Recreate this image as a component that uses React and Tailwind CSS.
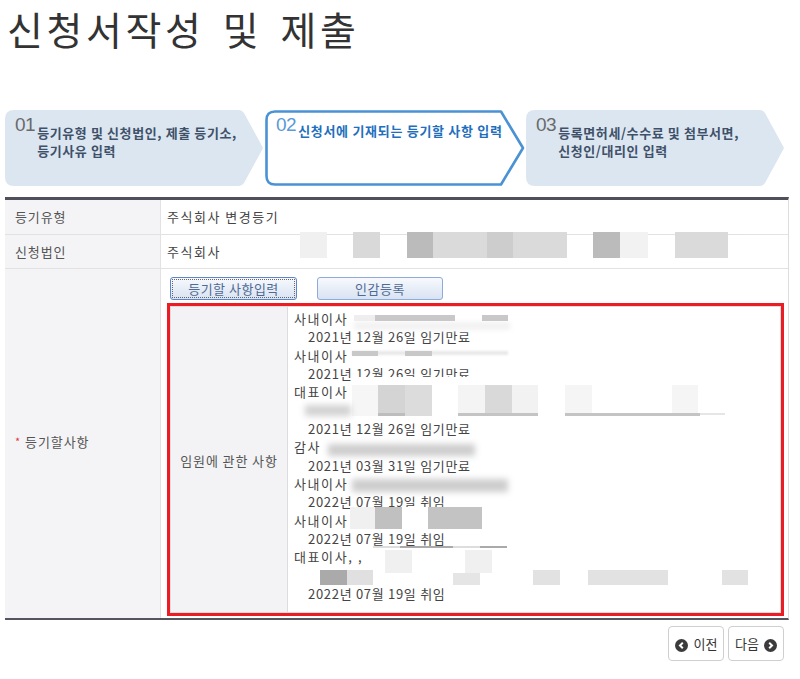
import React from "react";

const FONT = "font-['Noto_Sans_CJK_KR','Noto_Sans',sans-serif]";

function StepShape({ active }) {
  if (active) {
    return (
      <svg className="absolute inset-0" width="260" height="76" viewBox="0 0 260 76">
        <path
          d="M10 1.5 H236 L258 38 L236 74.5 H10 Q1.5 74.5 1.5 66 V10 Q1.5 1.5 10 1.5 Z"
          fill="#ffffff"
          stroke="#4a92d4"
          strokeWidth="2.6"
          strokeLinejoin="round"
        />
      </svg>
    );
  }
  return (
    <svg className="absolute inset-0" width="260" height="76" viewBox="0 0 260 76">
      <path
        d="M9 0 H234 Q237 0 239 3 L257 36 Q258.5 38 257 40 L239 73 Q237 76 234 76 H9 Q0 76 0 67 V9 Q0 0 9 0 Z"
        fill="#dce6f1"
      />
    </svg>
  );
}

function Step({ num, lines, active, className }) {
  return (
    <div className={`relative h-[76px] ${className}`}>
      <StepShape active={active} />
      <div className={`relative flex ${active ? "pl-[11px]" : "pl-[10px]"} pt-[5px]`}>
        <span
          className={`font-['Liberation_Sans',sans-serif] text-[19px] leading-[20px] tracking-[-0.5px] ${
            active ? "text-[#5b9ad6]" : "text-[#6a6a6a]"
          }`}
        >
          {num}
        </span>
        <div
          className={`ml-[2px] font-bold text-[13px] leading-[18px] ${
            active
              ? "pt-[7px] tracking-[0.7px] text-[#1f6fbd]"
              : "pt-[9px] tracking-[0.6px] text-[#3f5169]"
          }`}
        >
          {lines.map((l, i) => (
            <div key={i}>{l}</div>
          ))}
        </div>
      </div>
    </div>
  );
}

const redactions = [
  // row 2
  [300, 232, 27, 26, "#f0f0f0"],
  [353, 232, 27, 26, "#d9d9d9"],
  [407, 232, 26, 26, "#bbbbbb"],
  [433, 232, 54, 26, "#dadada"],
  [487, 232, 26, 26, "#cdcdcd"],
  [513, 232, 54, 26, "#dadada"],
  [593, 232, 27, 26, "#bbbbbb"],
  [620, 232, 28, 26, "#f2f2f2"],
  [675, 232, 53, 26, "#dadada"],
  [745, 234, 43, 1, "#e4e4e4"],
  // line 1
  [354, 322, 156, 8, "#f2f2f2", 2],
  [354, 315, 21, 6, "#eeeeee"],
  [375, 315, 80, 6, "#c8c8c8"],
  [482, 315, 26, 6, "#c8c8c8"],
  // line 3
  [352, 351, 156, 4, "#e8e8e8", 1],
  [352, 351, 26, 5, "#c8c8c8"],
  [405, 351, 27, 5, "#c8c8c8"],
  // line 4 cover
  [352, 377, 170, 8, "#ffffff"],
  // line 5 blocks
  [352, 385, 26, 31, "#f6f6f6"],
  [378, 385, 27, 31, "#d4d4d4"],
  [405, 385, 27, 31, "#dcdcdc"],
  [458, 385, 27, 31, "#f4f4f4"],
  [485, 385, 27, 31, "#d9d9d9"],
  [512, 385, 26, 31, "#f2f2f2"],
  [565, 385, 27, 31, "#f5f5f5"],
  [672, 385, 26, 31, "#f5f5f5"],
  [378, 413, 27, 3, "#bdbdbd"],
  [458, 413, 54, 3, "#c4c4c4"],
  [512, 413, 26, 3, "#c4c4c4"],
  [565, 413, 135, 3, "#c4c4c4"],
  [700, 413, 25, 2, "#e6e6e6"],
  // line 6 smudge
  [305, 405, 46, 11, "#d2d2d2", 3],
  // line 8 smudge
  [328, 444, 147, 12, "#cdcdcd", 3],
  // line 10 smudge
  [352, 479, 156, 13, "#cdcdcd", 3],
  // line 11 cover + blocks
  [350, 507, 160, 6, "#ffffff"],
  [350, 507, 25, 22, "#f0f0f0"],
  [375, 507, 27, 22, "#c0c0c0"],
  [428, 507, 54, 22, "#c3c3c3"],
  // line 13 underline
  [373, 546, 27, 2, "#dddddd"],
  [400, 546, 53, 2, "#aaaaaa"],
  [453, 546, 27, 2, "#dddddd"],
  [480, 546, 27, 2, "#aaaaaa"],
  // line 14
  [385, 550, 27, 23, "#f0f0f0"],
  [465, 550, 27, 23, "#f0f0f0"],
  // line 15
  [320, 570, 27, 15, "#aaaaaa"],
  [347, 570, 26, 15, "#e0e0e0"],
  [453, 573, 27, 12, "#e5e5e5"],
  [533, 570, 27, 15, "#e2e2e2"],
  [588, 570, 80, 15, "#e2e2e2"],
  [722, 570, 26, 15, "#e2e2e2"],
];

function Redactions() {
  return (
    <>
      {redactions.map(([x, y, w, h, c, b], i) => (
        <div
          key={i}
          className="absolute"
          style={{
            left: x,
            top: y,
            width: w,
            height: h,
            background: c,
            filter: b ? `blur(${b}px)` : undefined,
          }}
        />
      ))}
    </>
  );
}

function NavIcon({ dir }) {
  return (
    <svg width="13" height="13" viewBox="0 0 13 13">
      <circle cx="6.5" cy="6.5" r="6.5" fill="#3b3b3b" />
      {dir === "left" ? (
        <path d="M7.8 3.8 L5 6.5 L7.8 9.2" stroke="#fff" strokeWidth="2" fill="none" />
      ) : (
        <path d="M5.2 3.8 L8 6.5 L5.2 9.2" stroke="#fff" strokeWidth="2" fill="none" />
      )}
    </svg>
  );
}

const officerLines = [
  { t: "사내이사", i: false },
  { t: "2021년 12월 26일 임기만료", i: true },
  { t: "사내이사", i: false },
  { t: "2021년 12월 26일 임기만료", i: true },
  { t: "대표이사", i: false },
  { t: "", i: true },
  { t: "2021년 12월 26일 임기만료", i: true },
  { t: "감사", i: false },
  { t: "2021년 03월 31일 임기만료", i: true },
  { t: "사내이사", i: false },
  { t: "2022년 07월 19일 취임", i: true },
  { t: "사내이사", i: false },
  { t: "2022년 07월 19일 취임", i: true },
  { t: "대표이사, ,", i: false },
  { t: "", i: true },
  { t: "2022년 07월 19일 취임", i: true },
];

export default function App() {
  return (
    <div className={`relative w-[800px] h-[679px] overflow-hidden bg-white text-[#333] ${FONT}`}>
      <h1 className="pl-[7px] text-[39px] leading-[56px] font-normal tracking-[3.6px] text-[#333] [word-spacing:6px] whitespace-nowrap">
        신청서작성 및 제출
      </h1>

      <div className="mt-[54px] flex pl-[5px]">
        <Step
          className="w-[258px]"
          num="01"
          lines={["등기유형 및 신청법인, 제출 등기소,", "등기사유 입력"]}
        />
        <Step
          className="ml-[2px] w-[260px]"
          active
          num="02"
          lines={["신청서에 기재되는 등기할 사항 입력"]}
        />
        <Step
          className="ml-[1px] w-[260px]"
          num="03"
          lines={["등록면허세/수수료 및 첨부서면,", "신청인/대리인 입력"]}
        />
      </div>

      <div className="ml-[5px] mt-[11px] w-[784px] border-t-[3px] border-t-[#50505c] border-r border-r-[#dddddd] border-b-2 border-b-[#55555f] text-[13px] tracking-[0.9px]">
        <div className="grid grid-cols-[156px_1fr] h-[35px] border-b border-[#e2e2e2]">
          <div className="flex items-center pl-[10px] bg-[#f4f4f6] border-r border-[#e2e2e2] text-[#555]">
            등기유형
          </div>
          <div className="flex items-center pl-[6px] text-[#444] tracking-[1.5px]">주식회사 변경등기</div>
        </div>
        <div className="grid grid-cols-[156px_1fr] h-[34px] border-b border-[#e2e2e2]">
          <div className="flex items-center pl-[10px] bg-[#f4f4f6] border-r border-[#e2e2e2] text-[#555]">
            신청법인
          </div>
          <div className="flex items-center pl-[6px] text-[#444] tracking-[1.5px]">주식회사</div>
        </div>
        <div className="grid grid-cols-[156px_1fr]">
          <div className="flex items-center pl-[10px] bg-[#f4f4f6] border-r border-[#e2e2e2] text-[#555] pb-[4px]">
            <span className="text-[#e23c3c] text-[11px] mr-[4px]">*</span>
            등기할사항
          </div>
          <div className="pl-[6px] pr-[4px] pt-[8px] pb-[2px]">
            <div className="flex gap-[20px] ml-[3px] tracking-[0.5px]">
              <button className="h-[23px] w-[127px] rounded-[3px] border border-[#5d86c9] bg-gradient-to-b from-[#f7f9fd] to-[#d9e3f2] p-[1px] text-[13px] text-[#4f6a94] leading-none">
                <span className="flex h-full w-full items-center justify-center border border-dotted border-[#666]">
                  등기할 사항입력
                </span>
              </button>
              <button className="h-[23px] w-[126px] rounded-[3px] border border-[#8eaad6] bg-gradient-to-b from-[#f7f9fd] to-[#d9e3f2] text-[13px] text-[#4f6a94] leading-none">
                인감등록
              </button>
            </div>
            <div className="mt-[3px] h-[313px] border-[3px] border-[#ec1c24]">
              <div className="flex h-full border border-[#dcdcdc]">
                <div className="flex w-[117px] items-center justify-center bg-[#f3f3f5] border-r border-[#dcdcdc] pt-[2px] text-[#555]">
                  임원에 관한 사항
                </div>
                <div className="flex-1 pl-[6px] pt-[3px] text-[#444] leading-[18.35px]">
                  {officerLines.map((l, i) => (
                    <div key={i} className={`h-[18.35px] whitespace-pre ${l.i ? "pl-[14px] tracking-[0.7px]" : "tracking-[1.6px]"}`}>
                      {l.t}
                    </div>
                  ))}
                </div>
              </div>
            </div>
          </div>
        </div>
      </div>

      <div className="mt-[6px] flex justify-end gap-[4px] pr-[16px]">
        <button className="flex h-[35px] w-[56px] items-start justify-center gap-[6px] rounded-[4px] border border-[#cfcfcf] bg-white pt-[9px] text-[13px] text-[#333] leading-[16px]">
          <span className="mt-[3px]">
            <NavIcon dir="left" />
          </span>
          이전
        </button>
        <button className="flex h-[35px] w-[56px] items-start justify-center gap-[5px] rounded-[4px] border border-[#cfcfcf] bg-white pt-[9px] text-[13px] text-[#333] leading-[16px]">
          다음
          <span className="mt-[3px]">
            <NavIcon dir="right" />
          </span>
        </button>
      </div>

      <Redactions />
    </div>
  );
}
